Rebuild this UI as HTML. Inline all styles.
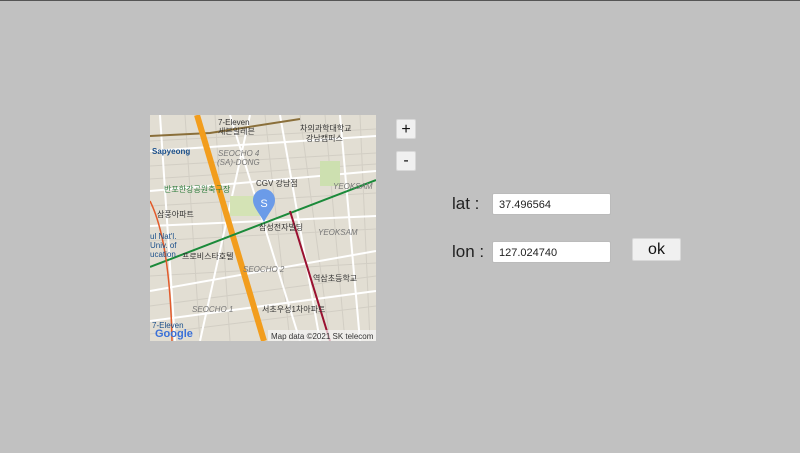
<!DOCTYPE html>
<html><head><style>
body{margin:0;width:800px;height:453px;background:#c1c1c1;border-top:1px solid #555;box-sizing:border-box;position:relative;overflow:hidden;font-family:"Liberation Sans","Noto Sans CJK KR",sans-serif}
.btn{position:absolute;background:#f0f0f0;border:1px solid #d8d8d8;border-radius:2px;box-sizing:border-box;text-align:center;color:#111}
.lbl{position:absolute;font-size:17px;color:#222}
.inp{position:absolute;background:#fff;border:1px solid #bbb;border-radius:2px;box-sizing:border-box;font-size:11px;padding:5px 0 0 6px;color:#222;width:119px;height:22px}
</style></head><body>
<svg style="position:absolute;left:150px;top:114px" width="226" height="226" viewBox="150 114 226 226">
<rect x="150" y="114" width="226" height="226" fill="#e2ded3"/>
<g stroke="#d2cec4" stroke-width="1" fill="none">
<path d="M150 140 L376 128 M150 165 L376 152 M150 178 L376 163 M150 205 L376 192 M150 240 L376 228 M150 275 L376 262 M150 305 L376 275 M150 333 L376 305 M185 114 L200 340 M215 114 L230 340 M265 114 L290 340 M300 114 L330 340 M325 114 L345 340 M360 114 L370 340"/>
</g>
<g stroke="#fff" stroke-width="2" fill="none">
<path d="M150 150 L376 135 M150 190 L376 170 M150 225 L376 215 M150 290 L376 250 M150 320 L376 290 M230 114 L300 340 M280 114 L320 340 M340 114 L360 340 M160 114 L175 340 M250 114 L200 340"/>
</g>
<rect x="320" y="160" width="20" height="25" fill="#cde0b0"/>
<rect x="230" y="195" width="35" height="20" fill="#d4e3b5"/>
<path d="M150 135 L210 132 L300 118" stroke="#8a6f3a" stroke-width="2" fill="none"/>
<path d="M197 114 L264 340" stroke="#f29d1d" stroke-width="6"/>
<path d="M150 266 L376 179" stroke="#1b8a3a" stroke-width="2"/>
<path d="M290 210 L330 340" stroke="#9a1030" stroke-width="2"/>
<path d="M150 200 Q170 240 172 340" stroke="#e25a2a" stroke-width="1.5" fill="none"/>
<g font-size="8" fill="#333">
<text x="218" y="124">7-Eleven</text><text x="218" y="133">세븐일레븐</text>
<text x="300" y="130">차의과학대학교</text><text x="306" y="140">강남캠퍼스</text>
<text x="152" y="153" fill="#1a4f8a" font-weight="bold">Sapyeong</text>
<text x="218" y="155" fill="#777" font-style="italic">SEOCHO 4</text>
<text x="217" y="164" fill="#777" font-style="italic">(SA)-DONG</text>
<text x="256" y="185">CGV 강남점</text>
<text x="164" y="191" fill="#2a7a3a">반포한강공원축구장</text>
<text x="333" y="188" fill="#777" font-style="italic">YEOKSAM</text>
<text x="157" y="216">삼풍아파트</text>
<text x="259" y="229">삼성전자빌딩</text>
<text x="318" y="234" fill="#777" font-style="italic">YEOKSAM</text>
<text x="150" y="238" fill="#1a4f8a">ul Nat'l.</text><text x="150" y="247" fill="#1a4f8a">Univ. of</text><text x="150" y="256" fill="#1a4f8a">ucation</text>
<text x="182" y="258">프로비스타호텔</text>
<text x="243" y="271" fill="#777" font-style="italic">SEOCHO 2</text>
<text x="313" y="280">역삼초등학교</text>
<text x="192" y="311" fill="#777" font-style="italic">SEOCHO 1</text>
<text x="262" y="311">서초우성1차아파트</text>
<text x="152" y="327" fill="#1a4f8a">7-Eleven</text>
</g>
<text x="155" y="336" font-size="11" font-weight="bold" fill="#3a70d8">Google</text>
<rect x="268" y="329" width="108" height="11" fill="rgba(245,245,245,0.7)"/>
<text x="271" y="338" font-size="8" fill="#333">Map data ©2021 SK telecom</text>
<path d="M264 221 C258 210 253 206 253 199 A11 11 0 0 1 275 199 C275 206 270 210 264 221Z" fill="#6b9be8"/>
<text x="264" y="206" font-size="11" fill="#fff" text-anchor="middle">S</text>
</svg>
<div class="btn" style="left:396px;top:118px;width:20px;height:20px;font-size:16px;line-height:19px">+</div>
<div class="btn" style="left:396px;top:150px;width:20px;height:20px;font-size:16px;line-height:18px">-</div>
<div class="lbl" style="left:452px;top:193px">lat :</div>
<div class="inp" style="left:492px;top:192px">37.496564</div>
<div class="lbl" style="left:452px;top:241px">lon :</div>
<div class="inp" style="left:492px;top:240px">127.024740</div>
<div class="btn" style="left:632px;top:237px;width:49px;height:23px;font-size:16px;line-height:22px">ok</div>
</body></html>
